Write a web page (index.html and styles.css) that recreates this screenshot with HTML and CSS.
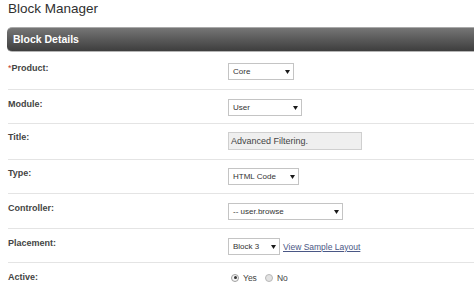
FILE: index.html
```html
<!DOCTYPE html>
<html>
<head>
<meta charset="utf-8">
<title>Block Manager</title>
<link rel="stylesheet" href="styles.css">
</head>
<body>
<div class="page">
  <h1 class="page-title">Block Manager</h1>
  <div class="panel-head">Block Details</div>
  <div class="form">
    <div class="row row-first">
      <div class="label"><span class="req">*</span>Product:</div>
      <div class="field">
        <div class="select sel-product"><span>Core</span><svg class="arrow" width="5" height="4" viewBox="0 0 5 4"><path d="M0 0H5L2.5 4Z" fill="#1a1a1a"/></svg></div>
      </div>
    </div>
    <div class="row">
      <div class="label">Module:</div>
      <div class="field">
        <div class="select sel-module"><span>User</span><svg class="arrow" width="5" height="4" viewBox="0 0 5 4"><path d="M0 0H5L2.5 4Z" fill="#1a1a1a"/></svg></div>
      </div>
    </div>
    <div class="row row-tall">
      <div class="label">Title:</div>
      <div class="field">
        <div class="text-input">Advanced Filtering.</div>
      </div>
    </div>
    <div class="row row-type">
      <div class="label">Type:</div>
      <div class="field">
        <div class="select sel-type"><span>HTML Code</span><svg class="arrow" width="5" height="4" viewBox="0 0 5 4"><path d="M0 0H5L2.5 4Z" fill="#1a1a1a"/></svg></div>
      </div>
    </div>
    <div class="row row-ctrl">
      <div class="label">Controller:</div>
      <div class="field">
        <div class="select sel-ctrl"><span>-- user.browse</span><svg class="arrow" width="5" height="4" viewBox="0 0 5 4"><path d="M0 0H5L2.5 4Z" fill="#1a1a1a"/></svg></div>
      </div>
    </div>
    <div class="row">
      <div class="label">Placement:</div>
      <div class="field">
        <div class="select sel-place"><span>Block 3</span><svg class="arrow" width="5" height="4" viewBox="0 0 5 4"><path d="M0 0H5L2.5 4Z" fill="#1a1a1a"/></svg></div>
        <a class="link" href="#">View Sample Layout</a>
      </div>
    </div>
    <div class="row row-last">
      <div class="label">Active:</div>
      <div class="field radios">
        <span class="radio checked"></span><span class="radio-label">Yes</span>
        <span class="radio"></span><span class="radio-label">No</span>
      </div>
    </div>
  </div>
</div>
</body>
</html>
```

FILE: styles.css
```css
html, body {
  margin: 0;
  padding: 0;
  background: #ffffff;
  overflow: hidden;
}

.page {
  font-family: "Liberation Sans", Arial, sans-serif;
  color: #333333;
  padding-left: 7px;
}

.page-title {
  margin: 0;
  padding: 1px 0 0 1px;
  font-size: 13.5px;
  line-height: 16px;
  font-weight: normal;
  color: #2f2f2f;
}

.panel-head {
  margin-top: 10px;
  margin-right: -10px;
  height: 25px;
  box-sizing: border-box;
  padding-left: 6px;
  border-radius: 5px 0 0 5px;
  border-top: 1px solid #a9a9a9;
  border-bottom: 1px solid #b5b5b5;
  background: linear-gradient(to bottom, #767676 0%, #5c5c5c 45%, #3e3e3e 100%);
  color: #ffffff;
  font-size: 10.5px;
  font-weight: bold;
  line-height: 23px;
}

.form {
  padding-left: 1px;
}

.row {
  display: flex;
  align-items: flex-start;
  box-sizing: border-box;
  height: 34px;
  padding-top: 9px;
  border-bottom: 1px solid #e4e4e4;
}

.row-first {
  height: 38px;
  padding-top: 11px;
}

.row-tall {
  height: 36px;
  padding-top: 8px;
}

.row-type {
  padding-top: 8px;
}

.row-ctrl {
  height: 35px;
}

.row-last {
  border-bottom: none;
}

.label {
  width: 220px;
  flex: none;
  font-size: 9px;
  line-height: 11px;
  font-weight: bold;
  color: #444444;
}

.req {
  color: #c0392b;
  font-weight: normal;
}

.field {
  display: flex;
  align-items: center;
}

.select {
  display: flex;
  align-items: center;
  justify-content: space-between;
  box-sizing: border-box;
  height: 17px;
  padding: 0 3px 0 4px;
  border: 1px solid #c4c4c4;
  background: #ffffff;
  font-size: 8px;
  color: #333333;
}

.arrow {
  display: block;
  flex: none;
}

.sel-product { width: 66px; }
.sel-module { width: 74px; }
.sel-type { width: 71px; }
.sel-ctrl { width: 115px; }
.sel-place { width: 52px; }

.text-input {
  box-sizing: border-box;
  width: 134px;
  height: 18px;
  padding-left: 2px;
  border: 1px solid #cfcfcf;
  background: #efefef;
  font-size: 9px;
  line-height: 16px;
  color: #444444;
}

.link {
  margin-left: 3px;
  font-size: 8.5px;
  color: #4a5785;
  text-decoration: underline;
}

.radios {
  height: 11px;
  padding-left: 3px;
  font-size: 8.5px;
  color: #444444;
}

.radio {
  box-sizing: border-box;
  width: 8px;
  height: 8px;
  border-radius: 50%;
  border: 1px solid #b8b8b8;
  background: #e2e2e2;
  position: relative;
}

.radio.checked {
  background: #f4f4f4;
  border-color: #a0a0a0;
}

.radio.checked::after {
  content: "";
  position: absolute;
  left: 1.5px;
  top: 1.5px;
  width: 3px;
  height: 3px;
  border-radius: 50%;
  background: #333333;
}

.radio-label {
  margin-left: 4px;
  margin-right: 8px;
}
```
